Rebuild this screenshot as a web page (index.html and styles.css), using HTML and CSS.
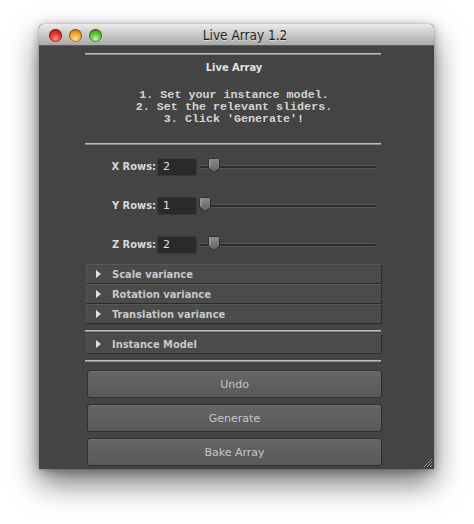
FILE: index.html
```html
<!DOCTYPE html>
<html>
<head>
<meta charset="utf-8">
<link rel="stylesheet" href="styles.css">
</head>
<body>
<div class="window">
  <div class="titlebar">
    <div class="lights">
      <span class="light red"></span>
      <span class="light yellow"></span>
      <span class="light green"></span>
    </div>
    <div class="title">Live Array 1.2</div>
  </div>
  <div class="content">
    <div class="sep"></div>
    <div class="heading">Live Array</div>
    <div class="instructions">1. Set your instance model.
2. Set the relevant sliders.
3. Click 'Generate'!</div>
    <div class="sep sep-lower"></div>
    <div class="rows">
      <div class="row">
        <label class="row-label">X Rows:</label>
        <div class="field">2</div>
        <div class="slider"><div class="track"></div><svg class="thumb" style="left:9px" width="12" height="15" viewBox="0 0 12 15"><defs><linearGradient id="tg1" x1="0" y1="0" x2="0" y2="1"><stop offset="0" stop-color="#8c8c8c"/><stop offset="1" stop-color="#626262"/></linearGradient></defs><path d="M0.5 1.5 Q0.5 0.5 1.5 0.5 H10.5 Q11.5 0.5 11.5 1.5 V10 L6 14.5 L0.5 10 Z" fill="url(#tg1)" stroke="#2e2e2e"/><path d="M2 2 V9" stroke="#a8a8a8" stroke-width="1"/></svg></div>
      </div>
      <div class="row">
        <label class="row-label">Y Rows:</label>
        <div class="field">1</div>
        <div class="slider"><div class="track"></div><svg class="thumb" style="left:0px" width="12" height="15" viewBox="0 0 12 15"><defs><linearGradient id="tg2" x1="0" y1="0" x2="0" y2="1"><stop offset="0" stop-color="#8c8c8c"/><stop offset="1" stop-color="#626262"/></linearGradient></defs><path d="M0.5 1.5 Q0.5 0.5 1.5 0.5 H10.5 Q11.5 0.5 11.5 1.5 V10 L6 14.5 L0.5 10 Z" fill="url(#tg2)" stroke="#2e2e2e"/><path d="M2 2 V9" stroke="#a8a8a8" stroke-width="1"/></svg></div>
      </div>
      <div class="row">
        <label class="row-label">Z Rows:</label>
        <div class="field">2</div>
        <div class="slider"><div class="track"></div><svg class="thumb" style="left:9px" width="12" height="15" viewBox="0 0 12 15"><defs><linearGradient id="tg3" x1="0" y1="0" x2="0" y2="1"><stop offset="0" stop-color="#8c8c8c"/><stop offset="1" stop-color="#626262"/></linearGradient></defs><path d="M0.5 1.5 Q0.5 0.5 1.5 0.5 H10.5 Q11.5 0.5 11.5 1.5 V10 L6 14.5 L0.5 10 Z" fill="url(#tg3)" stroke="#2e2e2e"/><path d="M2 2 V9" stroke="#a8a8a8" stroke-width="1"/></svg></div>
      </div>
    </div>
    <div class="frames">
      <div class="frame"><span class="arrow"></span><span class="frame-label">Scale variance</span></div>
      <div class="frame"><span class="arrow"></span><span class="frame-label">Rotation variance</span></div>
      <div class="frame"><span class="arrow"></span><span class="frame-label">Translation variance</span></div>
    </div>
    <div class="sep sep-mid"></div>
    <div class="frames frames-single">
      <div class="frame"><span class="arrow"></span><span class="frame-label">Instance Model</span></div>
    </div>
    <div class="sep sep-mid"></div>
    <div class="buttons">
      <button class="btn">Undo</button>
      <button class="btn">Generate</button>
      <button class="btn">Bake Array</button>
    </div>
  </div>
  <svg class="grip" width="12" height="12" viewBox="0 0 12 12">
    <path d="M11 3 L3 11 M11 6 L6 11 M11 9 L9 11" stroke="#9a9a9a" stroke-width="1"/>
    <path d="M11 4 L4 11 M11 7 L7 11" stroke="#2e2e2e" stroke-width="1"/>
  </svg>
</div>
</body>
</html>
```

FILE: styles.css
```css
html, body {
  margin: 0;
  padding: 0;
  background: #ffffff;
}

body {
  min-height: 524px;
  padding-top: 24px;
  box-sizing: border-box;
}

.window {
  position: relative;
  margin: 0 0 0 39px;
  width: 395px;
  height: 445px;
  background: #444444;
  border-radius: 5px 5px 0 0;
  overflow: hidden;
  box-shadow: 0 14px 30px rgba(0, 0, 0, 0.55), 0 2px 10px rgba(0, 0, 0, 0.3), 0 0 1px rgba(0, 0, 0, 0.5);
}

.titlebar {
  height: 21px;
  display: flex;
  align-items: center;
  background: linear-gradient(#ebebeb, #c9c9c9 50%, #a9a9a9);
  border-bottom: 1px solid #5c5c5c;
}

.lights {
  display: flex;
  gap: 7px;
  padding-left: 10px;
  padding-top: 1px;
}

.light {
  width: 13px;
  height: 13px;
  border-radius: 50%;
  box-sizing: border-box;
  box-shadow: inset 0 0 0 1px rgba(0, 0, 0, 0.35);
}

.red {
  background: radial-gradient(circle at 50% 75%, #ff8a7a 0, #e8352a 45%, #a1110c 100%);
}

.yellow {
  background: radial-gradient(circle at 50% 75%, #ffe39a 0, #f3a326 45%, #b2660a 100%);
}

.green {
  background: radial-gradient(circle at 50% 75%, #c6f59a 0, #5fc23a 45%, #2a7a14 100%);
}

.title {
  flex: 1;
  text-align: center;
  padding-right: 46px;
  font-family: "DejaVu Sans Condensed", "DejaVu Sans", sans-serif;
  font-size: 13.5px;
  color: #1e1e1e;
  text-shadow: 0 1px 0 rgba(255, 255, 255, 0.5);
}

.content {
  padding: 7px 52px 0 47px;
  display: flex;
  flex-direction: column;
}

.sep {
  height: 1px;
  background: #bdbdbd;
  border-bottom: 1px solid #8a8a8a;
  margin-left: -1px;
  margin-right: 1px;
}

.heading {
  margin-top: 6px;
  line-height: 14px;
  text-align: center;
  font-family: "DejaVu Sans Condensed", "DejaVu Sans", sans-serif;
  font-weight: bold;
  font-size: 11px;
  color: #e2e2e2;
}

.instructions {
  margin-top: 14px;
  white-space: pre;
  text-align: center;
  font-family: "Liberation Mono", "DejaVu Sans Mono", monospace;
  font-size: 11.7px;
  line-height: 12px;
  font-weight: bold;
  color: #d4d4d4;
}

.sep-lower {
  margin-top: 18px;
}

.rows {
  margin-top: 12px;
  display: flex;
  flex-direction: column;
  gap: 20px;
}

.row {
  height: 19px;
  display: flex;
  align-items: center;
}

.row-label {
  width: 70px;
  text-align: right;
  font-family: "DejaVu Sans Condensed", "DejaVu Sans", sans-serif;
  font-weight: bold;
  font-size: 11px;
  color: #d8d8d8;
}

.field {
  margin-left: 1px;
  width: 40px;
  height: 18px;
  box-sizing: border-box;
  background: #2a2a2a;
  border: 1px solid #383838;
  border-radius: 2px;
  padding-left: 5px;
  font-family: "DejaVu Sans", sans-serif;
  font-size: 11px;
  line-height: 16px;
  color: #e0e0e0;
}

.slider {
  position: relative;
  margin-left: 2px;
  width: 178px;
  height: 19px;
  display: flex;
  align-items: center;
}

.track {
  flex: 1;
  height: 4px;
  box-sizing: border-box;
  background: #2c2c2c;
  border: 1px solid #555555;
  border-radius: 2px;
}

.thumb {
  position: absolute;
  top: 1px;
}

.frames {
  margin-top: 10px;
  display: flex;
  flex-direction: column;
}

.frames-single {
  margin-top: 2px;
}

.frame {
  height: 20px;
  box-sizing: border-box;
  display: flex;
  align-items: center;
  background: #4b4b4b;
  border: 1px solid #353535;
  border-top-color: #5a5a5a;
  border-left-color: #555555;
  border-bottom-color: #2a2a2a;
  border-right-color: #2e2e2e;
}

.arrow {
  width: 0;
  height: 0;
  margin-left: 9px;
  border-top: 4px solid transparent;
  border-bottom: 4px solid transparent;
  border-left: 5px solid #e0e0e0;
}

.frame-label {
  margin-left: 11px;
  font-family: "DejaVu Sans Condensed", "DejaVu Sans", sans-serif;
  font-weight: bold;
  font-size: 11px;
  color: #c8c8c8;
}

.sep-mid {
  margin-top: 6px;
}

.buttons {
  margin-top: 8px;
  display: flex;
  flex-direction: column;
  gap: 6px;
}

.btn {
  height: 28px;
  margin: 0 0 0 1px;
  padding: 0;
  box-sizing: border-box;
  background: linear-gradient(#656565, #5a5a5a);
  border: 1px solid #2e2e2e;
  border-radius: 3px;
  box-shadow: inset 0 1px 0 #707070;
  font-family: "DejaVu Sans", sans-serif;
  font-size: 11px;
  color: #c6c6c6;
}

.grip {
  position: absolute;
  right: 1px;
  bottom: 1px;
}
```
